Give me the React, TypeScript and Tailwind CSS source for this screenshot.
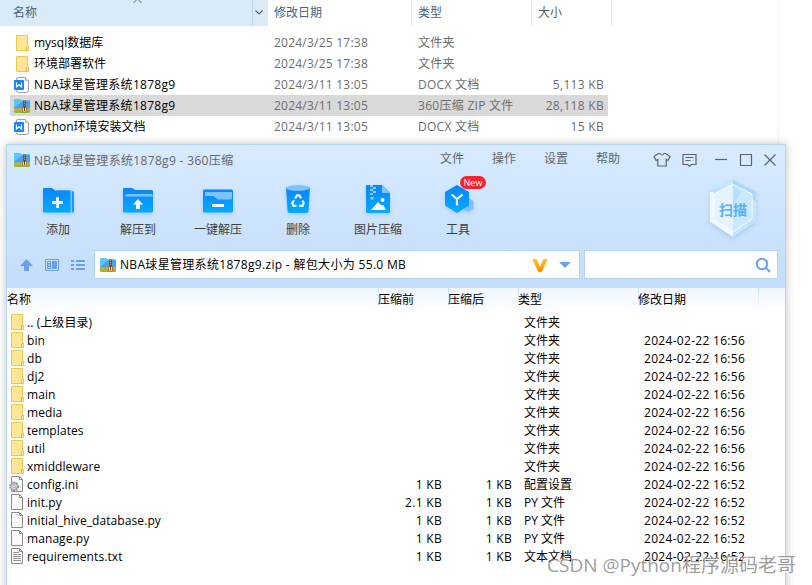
import { ReactNode } from "react";
import clsx from "clsx";

const explorerRows = [
  { icon: "folder", name: "mysql数据库", date: "2024/3/25 17:38", type: "文件夹", size: "" },
  { icon: "folder", name: "环境部署软件", date: "2024/3/25 17:38", type: "文件夹", size: "" },
  { icon: "doc", name: "NBA球星管理系统1878g9", date: "2024/3/11 13:05", type: "DOCX 文档", size: "5,113 KB" },
  { icon: "zip", name: "NBA球星管理系统1878g9", date: "2024/3/11 13:05", type: "360压缩 ZIP 文件", size: "28,118 KB" },
  { icon: "doc", name: "python环境安装文档", date: "2024/3/11 13:05", type: "DOCX 文档", size: "15 KB" },
];

const archiveRows = [
  { icon: "folder", name: ".. (上级目录)", before: "", after: "", type: "文件夹", date: "" },
  ...["bin", "db", "dj2", "main", "media", "templates", "util", "xmiddleware"].map((name) => ({
    icon: "folder",
    name,
    before: "",
    after: "",
    type: "文件夹",
    date: "2024-02-22 16:56",
  })),
  { icon: "ini", name: "config.ini", before: "1 KB", after: "1 KB", type: "配置设置", date: "2024-02-22 16:52" },
  { icon: "file", name: "init.py", before: "2.1 KB", after: "1 KB", type: "PY 文件", date: "2024-02-22 16:52" },
  { icon: "file", name: "initial_hive_database.py", before: "1 KB", after: "1 KB", type: "PY 文件", date: "2024-02-22 16:52" },
  { icon: "file", name: "manage.py", before: "1 KB", after: "1 KB", type: "PY 文件", date: "2024-02-22 16:52" },
  { icon: "txt", name: "requirements.txt", before: "1 KB", after: "1 KB", type: "文本文档", date: "2024-02-22 16:52" },
];

function FolderIcon() {
  return (
    <svg width="13" height="16" viewBox="0 0 13 16">
      <path d="M.5 .5h11v10.500h1v4.500H.5z" fill="#ffe694" stroke="#edc84f" />
      <path d="M10.500 15.500v-3.500l1-1" fill="none" stroke="#e8bc3c" />
    </svg>
  );
}

function ZipIcon() {
  return (
    <svg width="16" height="14" viewBox="0 0 16 14">
      <path d="M0 1q0-1 1-1h5l2 1.500h7q1 0 1 1V10H0z" fill="#5cc6fa" />
      <path d="M0 9l9-7.500h6q1 0 1 1V10H0z" fill="#3aa9f2" />
      <path d="M0 10.500h16v2q0 1.500-1.500 1.500h-13Q0 14 0 12.500z" fill="#7ec23c" />
      <path d="M0 9.500h16v2H0z" fill="#ff9c1a" />
      <path d="M9 1.500h3V9H9z" fill="#9b4a1c" />
      <path d="M10 2h1v1h-1zM10 4h1v1h-1zM10 6h1v1h-1z" fill="#c98a60" />
      <path d="M8.500 8.500h4v4.500h-4z" fill="#ffe7a0" stroke="#a8641c" strokeWidth=".8" />
      <path d="M10 7h1v5h-1z" fill="#7a3c18" />
    </svg>
  );
}

function DocIcon() {
  return (
    <svg width="16" height="16" viewBox="0 0 16 16">
      <path d="M2.500 3V2Q2.500 .5 4 .5h7.500L14.500 3.500v10q0 2-2 2H4.500q-2 0-2-2V13" fill="#fff" stroke="#9aa0ac" />
      <path d="M11.500 .5v3h3" fill="#dfe2e8" stroke="#9aa0ac" strokeWidth=".7" />
      <rect x="0" y="3" width="10" height="10" rx="1" fill="#1b84f8" />
      <path d="M2.500 5.500v4.500L5 7.800 7.500 10V5.500" fill="none" stroke="#fff" strokeWidth="1.200" />
    </svg>
  );
}

function FileIcon({ kind }: { kind: string }) {
  return (
    <svg width="17" height="16" viewBox="0 0 17 16">
      <path d="M4.500 .5h8l3 3v12h-11z" fill="#f9f9f9" stroke="#8b8b8b" />
      <path d="M12.500 .5v3h3" fill="none" stroke="#8b8b8b" />
      {kind === "txt" && (
        <path d="M6 4.500h6M6 6.500h8M6 8.500h8M6 10.500h8M6 12.500h8" stroke="#8d8d8d" strokeWidth=".9" />
      )}
      {kind === "ini" && (
        <g>
          <circle cx="7" cy="10.500" r="4.200" fill="#c9ced3" stroke="#8f959b" strokeWidth="1.600" strokeDasharray="1.700 1" />
          <circle cx="7" cy="10.500" r="3.300" fill="#cfd4d8" stroke="#8f959b" strokeWidth=".7" />
          <circle cx="7" cy="10.500" r="1.300" fill="#fff" stroke="#8f959b" strokeWidth=".7" />
        </g>
      )}
    </svg>
  );
}

function RowIcon({ icon }: { icon: string }) {
  if (icon === "folder") return <FolderIcon />;
  if (icon === "zip") return <ZipIcon />;
  if (icon === "doc") return <DocIcon />;
  return <FileIcon kind={icon} />;
}

const toolShadow = "drop-shadow-[0_2px_2px_rgba(60,130,230,0.25)]";

function Tool({ label, children }: { label: string; children: ReactNode }) {
  return (
    <div className="flex w-20 flex-col items-center">
      <svg width="34" height="30" viewBox="0 0 34 30" className={toolShadow}>
        {children}
      </svg>
      <span className="mt-[7px] h-4 leading-4 text-[#404040]">{label}</span>
    </div>
  );
}

function Toolbar() {
  return (
    <div className="flex h-[65px] pl-[11px]">
      <svg width="0" height="0" className="absolute">
        <defs>
          <linearGradient id="tool" x1="0" y1="0" x2="0" y2="1">
            <stop offset="0" stopColor="#0a84fb" />
            <stop offset="1" stopColor="#04acfe" />
          </linearGradient>
        </defs>
      </svg>
      <Tool label="添加">
        <path d="M16 5h14q2 0 2 2v19q0 1.500-1.500 1.500H16z" fill="#7cc0ff" />
        <path d="M31 6.500h2v19.500q0 1.500-2 1.500z" fill="#159bfc" />
        <path d="M2 4q0-1 1-1h8l3 2.500h14q1.500 0 1.500 1.500v20.500H3.500Q2 27.500 2 26z" fill="url(#tool)" />
        <path d="M16.500 12v11M11 17.500h11" stroke="#e5f6ff" strokeWidth="3" />
      </Tool>
      <Tool label="解压到">
        <path d="M2 4q0-1 1-1h8l3 2h16.500Q32 5 32 6.500V26q0 1.500-1.500 1.500h-27Q2 27.500 2 26z" fill="url(#tool)" />
        <path d="M4 11.500q0-2.500 2-2.500h24q2 0 2 2.500z" fill="#7cc4ff" />
        <path d="M17 14l5 5.500h-3V24h-4v-4.500h-3z" fill="#f0faff" />
      </Tool>
      <Tool label="一键解压">
        <rect x="2" y="4.500" width="30" height="23" rx="1.500" fill="url(#tool)" />
        <path d="M4 7h27v6q0 1.500-1.500 1.500H17L12 11H4z" fill="#7cc4ff" />
        <path d="M11 20.500h12" stroke="#f0faff" strokeWidth="3" />
      </Tool>
      <Tool label="删除">
        <path d="M5 2.500h24L27.500 26q-.2 2-2 2h-17q-1.800 0-2-2z" fill="url(#tool)" />
        <ellipse cx="17" cy="3" rx="12" ry="3" fill="#7cc4ff" />
        <g fill="none" stroke="#f0faff" strokeWidth="2.200">
          <path d="M14 13.500l2-3.200h2.300l1.700 3" />
          <path d="M21.500 15.500l1.200 2.500-1.200 2.800h-3.500" />
          <path d="M15.500 20.800h-3l-1.300-2.500 1.800-3" />
        </g>
      </Tool>
      <Tool label="图片压缩">
        <path d="M5 1q0-1 1-1h15l8 8v18.500q0 1.500-1.500 1.500h-21Q5 28 5 26.500z" fill="url(#tool)" />
        <path d="M21 0l8 8h-8z" fill="#7cc4ff" />
        <path d="M9 0h3v2H9zM12 2h3v2h-3zM9 4h3v2H9zM12 6h3v2h-3zM9 8h3v2H9zM9.500 12h3v2.500h-3z" fill="#8fd0ff" />
        <path d="M10 25l7-8 3.500 3.500L22 19.500l3 5.500z" fill="#f2fbff" />
        <circle cx="21.500" cy="15" r="2" fill="#f2fbff" />
      </Tool>
      <div className="relative">
        <Tool label="工具">
          <path d="M24 16l4-2.500 4.500 2.500v7.500L27.500 27l-5-2.500z" fill="#7cc0ff" />
          <path d="M16 0l12 7v13.500l-12 7.500-12-7.500V7z" fill="url(#tool)" />
          <path d="M10.500 9.500l5.500 4.500 5.500-4.500M16 14v6.500" fill="none" stroke="#e9f8ff" strokeWidth="2.200" />
        </Tool>
        <span className="absolute left-[42px] top-[-9px] flex h-[13px] w-[26px] items-center justify-center rounded-full bg-[#f9222d] font-['Open_Sans'] text-[9px] text-white">
          New
        </span>
      </div>
      <div className="relative ml-auto mr-[27px] mt-[-5px] flex h-[60px] w-[50px] items-center justify-center">
        <svg width="50" height="62" viewBox="0 0 50 62" className={clsx("absolute left-0 top-0", toolShadow)}>
          <defs>
            <linearGradient id="shield" x1="0" y1="0" x2="1" y2="1">
              <stop offset="0" stopColor="#a7d9fb" />
              <stop offset=".4" stopColor="#dff2ff" />
              <stop offset="1" stopColor="#b6dcfb" />
            </linearGradient>
          </defs>
          <path d="M25 0l23 11.500v30L25 57 2 41.500v-30z" fill="url(#shield)" />
          <path d="M25 0l23 11.500v10L25 5z" fill="#a5dafe" />
          <path d="M2 41.500L25 57v-5L6 39.500V12H2z" fill="#edf8ff" />
          <path d="M25 4.500l19 9.500v25L25 52 6 39V14z" fill="#e4f3ff" stroke="#f8fcff" />
          <path d="M25 5l18.500 9.500V38.500L25 51.500z" fill="#cae8fe" />
          <path d="M33 12l-8 14V5z" fill="#b1dffe" />
        </svg>
        <span className="relative pb-[2px] text-[14px] font-bold text-[#54b1fb]">扫描</span>
      </div>
    </div>
  );
}

function WindowControls() {
  return (
    <svg width="124" height="16" viewBox="0 0 124 16" fill="none" stroke="#606468" strokeWidth="1.200">
      <path d="M5.500 1.500L1 4.500l2 4 1.800-1V14h8.400V7.500l1.800 1 2-4-4.500-3h-1.500Q9 4.500 7 1.500z" />
      <path d="M30 2.500h13v10h-4.500l-2 1.800-2-1.800H30zM32.500 5.500h8M32.500 8.500h5" />
      <path d="M62 7.500h12" />
      <path d="M87.500 2.500h11v11h-11z" />
      <path d="M111.500 2.500l11 11M122.500 2.500l-11 11" />
    </svg>
  );
}

function AddressBar() {
  return (
    <div className="flex h-[29px] items-center pl-[13px]">
      <svg width="66" height="14" viewBox="0 0 66 14" fill="#6b9fe8">
        <path d="M6.500 1L13 8H9v5H4V8H0z" />
        <path d="M25.500 1.500h13v11h-13z" fill="none" stroke="#6b9fe8" />
        <path d="M27 3h10v8H27zM28 4h2v1h-2zM28 6.500h2v1h-2zM28 9h2v1h-2zM31 3v8h.8V3z" fillRule="evenodd" />
        <path d="M51 2h3v2h-3zM51 6h3v2h-3zM51 10h3v2h-3zM56 2h9v2h-9zM56 6h9v2h-9zM56 10h9v2h-9z" />
      </svg>
      <div className="ml-2 flex h-[29px] w-[486px] items-center border border-[#b3d4f6] bg-white pl-[5px] pr-[7px]">
        <ZipIcon />
        <span className="ml-1 text-black tracking-[0.32px]">NBA球星管理系统1878g9.zip - 解包大小为 55.0 MB</span>
        <svg width="40" height="16" viewBox="0 0 40 16" className="ml-auto">
          <defs>
            <linearGradient id="vip" x1="0" y1="0" x2="0" y2="1">
              <stop offset="0" stopColor="#ffc62e" />
              <stop offset="1" stopColor="#ff8a00" />
            </linearGradient>
          </defs>
          <path d="M0 2h4.500l3.500 8 3.500-8H16L10 14.500q-2 1.500-4 0z" fill="url(#vip)" />
          <path d="M27 5h12l-6 6z" fill="#6b9fe8" />
        </svg>
      </div>
      <div className="ml-1 flex h-[29px] w-[194px] items-center justify-end border border-[#b3d4f6] bg-white pr-[6px]">
        <svg width="16" height="16" viewBox="0 0 16 16" fill="none" stroke="#6b9fe8" strokeWidth="2">
          <circle cx="7" cy="7" r="5.200" />
          <path d="M11 11l4 4" />
        </svg>
      </div>
    </div>
  );
}

const archiveGrid = "grid grid-cols-[371px_70px_70px_120px_120px_1fr]";

function ArchiveTable() {
  return (
    <div className="h-[300px] bg-white text-black">
      <div className={clsx(archiveGrid, "h-[26px] bg-linear-to-b from-[#f0f7ff] to-white leading-[24px]")}>
        {["名称", "压缩前", "压缩后", "类型", "修改日期", ""].map((head, i) => (
          <div key={i} className="flex">
            {i > 0 && <span className="-mr-px h-[22px] w-px bg-linear-to-b from-[#c6e1fb] to-white" />}
            {head}
          </div>
        ))}
      </div>
      {archiveRows.map((row) => (
        <div key={row.name} className={clsx(archiveGrid, "h-[18px] leading-[18px]")}>
          <div className="flex">
            <span className={clsx("flex w-5 shrink-0", row.icon === "folder" ? "pl-1" : "")}>
              <RowIcon icon={row.icon} />
            </span>
            <span className="tracking-[0.08px]">{row.name}</span>
          </div>
          <div className="pr-[6px] text-right tracking-[0.3px]">{row.before}</div>
          <div className="pr-[6px] text-right tracking-[0.3px]">{row.after}</div>
          <div className="pl-[6px]">{row.type}</div>
          <div className="whitespace-nowrap pl-[6px] tracking-[0.3px]">{row.date}</div>
        </div>
      ))}
    </div>
  );
}

function Explorer() {
  return (
    <div className="mr-[33px] h-36 border-r border-[#f4f4f4]">
      <div className="flex h-[26px] leading-[26px] text-[#4c607a]">
        <div className="relative flex w-[268px] bg-[#d9ebf9] pl-[13px]">
          名称
          <svg width="9" height="5" viewBox="0 0 9 5" className="absolute left-[133px] top-[-1px]" fill="none" stroke="#66717c">
            <path d="M.5 4l4-4 4 4" />
          </svg>
          <div className="ml-auto flex w-4 items-center justify-center border-l border-[#bcd3e6] pb-[2px] pr-1">
            <svg width="8" height="5" viewBox="0 0 8 5" fill="none" stroke="#55606b" strokeWidth="1.100">
              <path d="M.5 .5L4 4 7.500 .5" />
            </svg>
          </div>
        </div>
        <div className="w-36 border-r border-[#e5e5e5] pl-[6px]">修改日期</div>
        <div className="w-[120px] border-r border-[#e5e5e5] pl-[6px]">类型</div>
        <div className="w-20 border-r border-[#e5e5e5] pl-[6px]">大小</div>
      </div>
      <div className="ml-[10px] mt-[6px] w-[598px]">
        {explorerRows.map((row, i) => (
          <div
            key={i}
            className={clsx(
              "grid h-[21px] grid-cols-[264px_144px_1fr_80px] items-center leading-[21px] text-[#6d6d6d]",
              row.icon === "zip" && "bg-[#d9d9d9]"
            )}
          >
            <div className="flex items-center text-black">
              <span className={clsx("flex w-5", row.icon === "folder" ? "pl-[6px]" : "pl-1")}>
                <RowIcon icon={row.icon} />
              </span>
              <span className={clsx("ml-1", row.name.startsWith("NBA") && "tracking-[0.28px]")}>{row.name}</span>
            </div>
            <div className="tracking-[0.23px]">{row.date}</div>
            <div className="whitespace-nowrap tracking-[0.28px]">{row.type}</div>
            <div className="pr-1 text-right tracking-[0.3px]">{row.size}</div>
          </div>
        ))}
      </div>
    </div>
  );
}

function App() {
  return (
    <div className="relative h-[585px] w-[812px] overflow-hidden bg-white font-['Open_Sans','Noto_Sans_CJK_SC',sans-serif] text-[12px]">
      <Explorer />
      <div className="ml-[6px] h-[460px] w-[780px] border border-[#b5d4f4] bg-linear-to-b from-[#d8ebff] to-[#c2ddfa] to-[143px] shadow-[0_0_8px_rgba(0,0,0,0.25)]">
        <div className="flex h-[30px] items-center pl-[7px] text-[#666]">
          <ZipIcon />
          <span className="ml-1 pt-[2px] tracking-[0.33px]">NBA球星管理系统1878g9 - 360压缩</span>
          <div className="ml-auto mr-[33px] flex gap-7 pb-[2px] text-[#5d6670]">
            <span>文件</span>
            <span>操作</span>
            <span>设置</span>
            <span>帮助</span>
          </div>
          <div className="mr-2">
            <WindowControls />
          </div>
        </div>
        <div className="pt-[10px]">
          <Toolbar />
        </div>
        <div className="pb-[9px]">
          <AddressBar />
        </div>
        <ArchiveTable />
      </div>
      <div className="absolute left-[547px] top-[552px] whitespace-nowrap text-[19px] leading-[26px] text-[#8a8a8a]/85 [text-shadow:1px_1px_0_#fff]">
        CSDN @Python程序源码老哥
      </div>
    </div>
  );
}

export default App;
